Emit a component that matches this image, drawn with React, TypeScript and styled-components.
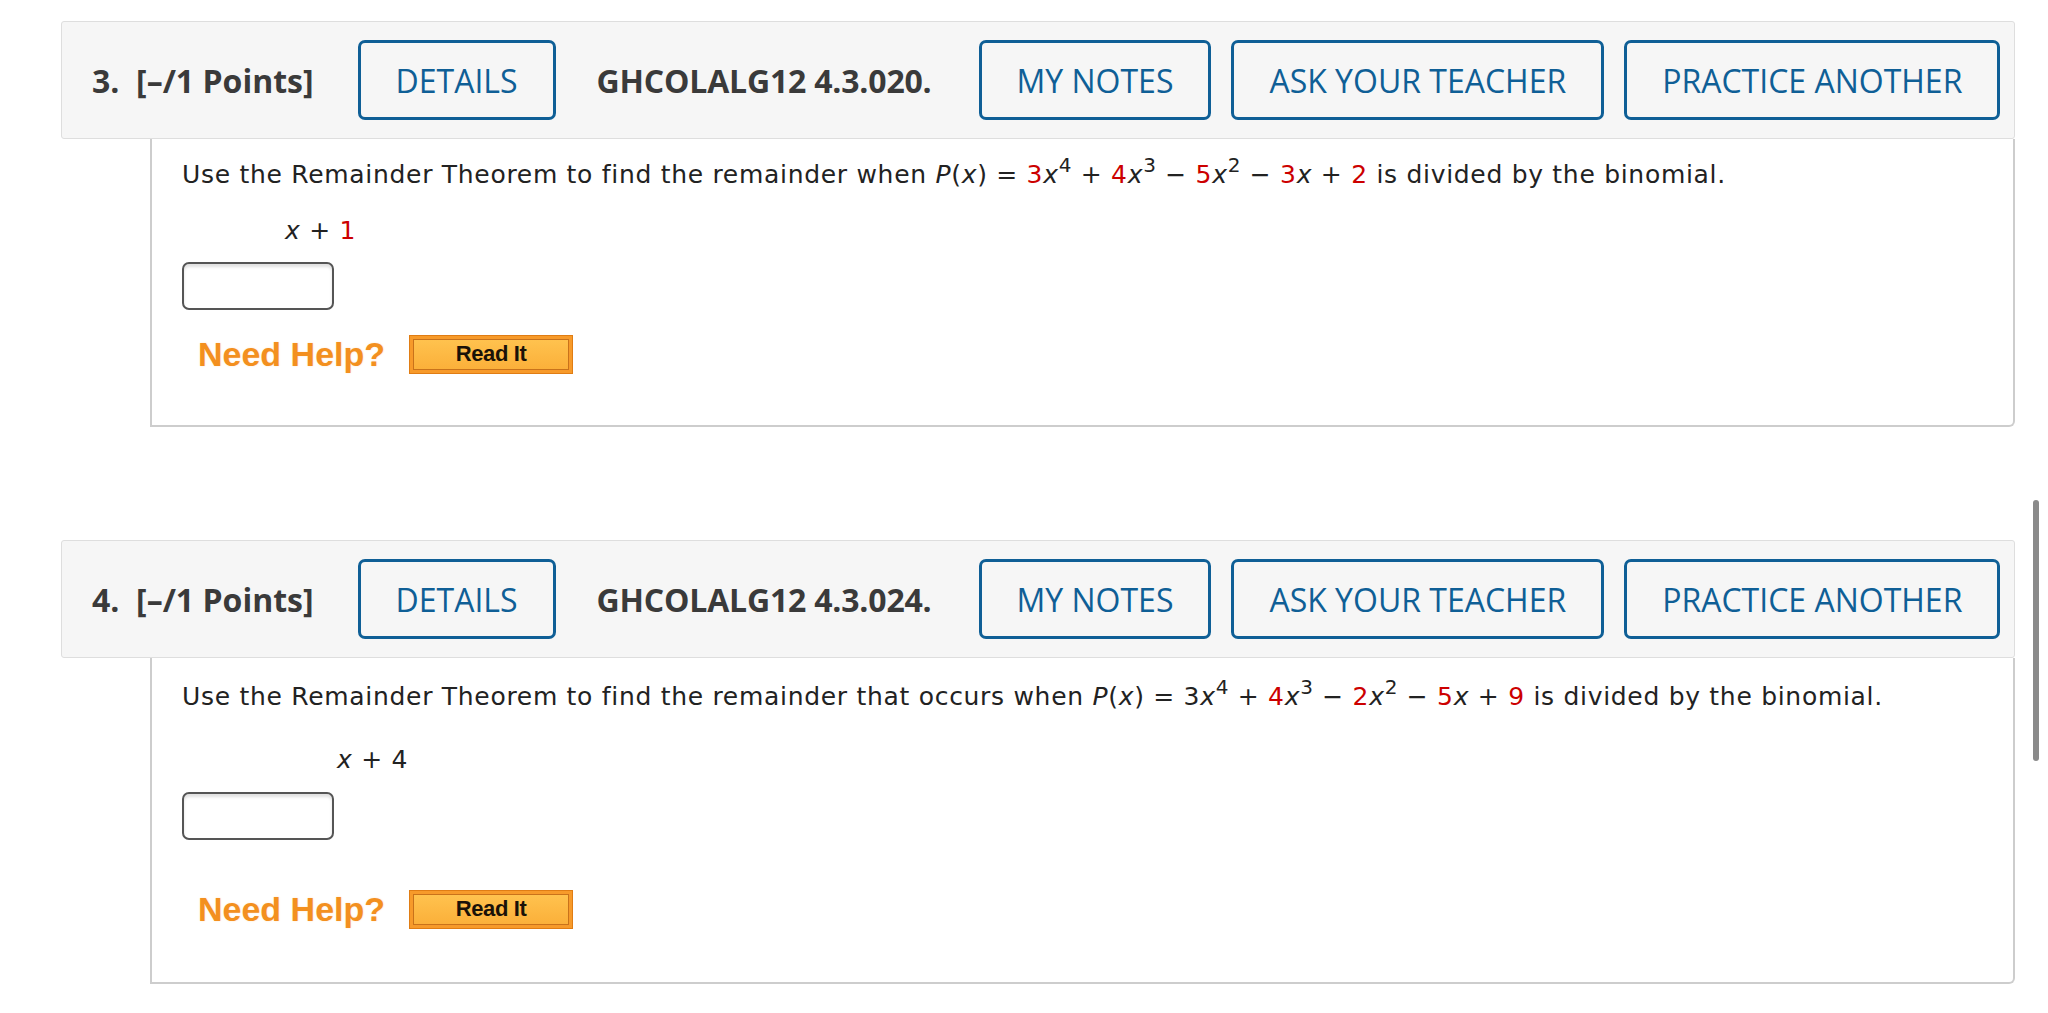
import React from "react";
import styled, { createGlobalStyle } from "styled-components";

const GlobalStyle = createGlobalStyle`
  html, body {
    margin: 0;
    padding: 0;
    background: #ffffff;
  }
  body {
    font-family: "DejaVu Sans", Verdana, sans-serif;
    overflow: hidden;
  }
`;

type Term = { text: string; red?: boolean; italic?: boolean; sup?: string };

type QuestionData = {
  num: number;
  code: string;
  lead: string;
  terms: Term[];
  binomial: Term[];
  binomialIndent: number;
  textTop: number;
  binomialGap: number;
  inputGap: number;
  helpGap: number;
  bottomGap: number;
};

const questions: QuestionData[] = [
  {
    num: 3,
    code: "GHCOLALG12 4.3.020.",
    lead: "Use the Remainder Theorem to find the remainder when ",
    terms: [
      { text: "P", italic: true },
      { text: "(" },
      { text: "x", italic: true },
      { text: ") = " },
      { text: "3", red: true },
      { text: "x", italic: true, sup: "4" },
      { text: " + " },
      { text: "4", red: true },
      { text: "x", italic: true, sup: "3" },
      { text: " \u2212 " },
      { text: "5", red: true },
      { text: "x", italic: true, sup: "2" },
      { text: " \u2212 " },
      { text: "3", red: true },
      { text: "x", italic: true },
      { text: " + " },
      { text: "2", red: true },
      { text: " is divided by the binomial." },
    ],
    binomial: [{ text: "x", italic: true }, { text: " + " }, { text: "1", red: true }],
    binomialIndent: 103,
    textTop: 18,
    binomialGap: 20,
    inputGap: 13,
    helpGap: 24,
    bottomGap: 51,
  },
  {
    num: 4,
    code: "GHCOLALG12 4.3.024.",
    lead: "Use the Remainder Theorem to find the remainder that occurs when ",
    terms: [
      { text: "P", italic: true },
      { text: "(" },
      { text: "x", italic: true },
      { text: ") = " },
      { text: "3" },
      { text: "x", italic: true, sup: "4" },
      { text: " + " },
      { text: "4", red: true },
      { text: "x", italic: true, sup: "3" },
      { text: " \u2212 " },
      { text: "2", red: true },
      { text: "x", italic: true, sup: "2" },
      { text: " \u2212 " },
      { text: "5", red: true },
      { text: "x", italic: true },
      { text: " + " },
      { text: "9", red: true },
      { text: " is divided by the binomial." },
    ],
    binomial: [{ text: "x", italic: true }, { text: "\u00a0+\u00a04" }],
    binomialIndent: 155,
    textTop: 21,
    binomialGap: 27,
    inputGap: 14,
    helpGap: 49,
    bottomGap: 53,
  },
];

const Page = styled.div`
  padding: 21px 33px 0 61px;
  display: flex;
  flex-direction: column;
  gap: 113px;
`;

const Question = styled.section`
  display: flex;
  flex-direction: column;
`;

const Header = styled.div`
  height: 118px;
  box-sizing: border-box;
  display: flex;
  align-items: center;
  padding: 0 21px 0 30px;
  background: #f6f6f6;
  border: 1px solid #dedede;
  border-radius: 3px;
  font-family: "Open Sans", sans-serif;
  font-size: 32px;
  white-space: nowrap;
`;

const Title = styled.div`
  flex-shrink: 0;
  font-weight: 700;
  color: #3a3a3a;
  white-space: pre;
  margin-right: 44px;
`;

const Code = styled.div`
  flex-shrink: 0;
  font-weight: 700;
  color: #3a3a3a;
  letter-spacing: -0.2px;
  margin: 0 47px 0 41px;
`;

const ButtonGroup = styled.div`
  flex-shrink: 0;
  display: flex;
  gap: 20px;
`;

const HeaderButton = styled.button`
  flex-shrink: 0;
  height: 80px;
  box-sizing: border-box;
  padding: 0 35px;
  border: 3px solid #0f5f96;
  border-radius: 7px;
  background: transparent;
  color: #0f5f96;
  font-family: "Open Sans", sans-serif;
  font-size: 32px;
  font-weight: 500;
  white-space: nowrap;
`;

const Body = styled.div<{ $top: number; $bottom: number }>`
  margin-left: 89px;
  border: 2px solid #cdcdcd;
  border-top: none;
  border-bottom-right-radius: 6px;
  padding: ${({ $top }) => $top}px 0 ${({ $bottom }) => $bottom}px 30px;
  display: flex;
  flex-direction: column;
  align-items: flex-start;
`;

const Statement = styled.p`
  margin: 0;
  font-size: 25px;
  letter-spacing: 0.7px;
  line-height: 36px;
  color: #222;
  white-space: nowrap;
`;

const Piece = styled.span<{ $red?: boolean; $italic?: boolean }>`
  color: ${({ $red }) => ($red ? "#cc0000" : "inherit")};
  font-style: ${({ $italic }) => ($italic ? "italic" : "normal")};
`;

const Sup = styled.sup`
  font-size: 0.8em;
  font-style: normal;
  line-height: 0;
  vertical-align: 0.55em;
`;

const Binomial = styled.div<{ $indent: number; $gap: number }>`
  margin: ${({ $gap }) => $gap}px 0 0 ${({ $indent }) => $indent}px;
  font-size: 25px;
  letter-spacing: 0.7px;
  line-height: 36px;
  color: #222;
`;

const AnswerBox = styled.input<{ $gap: number }>`
  margin-top: ${({ $gap }) => $gap}px;
  width: 152px;
  height: 48px;
  box-sizing: border-box;
  border: 2px solid #555;
  border-radius: 7px;
  box-shadow: inset 0 3px 3px rgba(0, 0, 0, 0.12);
  background: #fff;
  outline: none;
`;

const HelpRow = styled.div<{ $gap: number }>`
  margin: ${({ $gap }) => $gap}px 0 0 16px;
  display: flex;
  align-items: center;
  gap: 24px;
`;

const NeedHelp = styled.span`
  font-family: "Liberation Sans", Arial, sans-serif;
  font-weight: 700;
  font-size: 34px;
  line-height: 40px;
  color: #f3901f;
  text-shadow: 0 0 2px #fde3c4;
`;

const ReadIt = styled.button`
  width: 164px;
  height: 39px;
  box-sizing: border-box;
  padding: 3px;
  border: 1px solid #e07d14;
  background: #f79a2a;
  display: flex;
  cursor: pointer;
`;

const ReadItFace = styled.span`
  flex: 1;
  display: flex;
  align-items: center;
  justify-content: center;
  border: 1px solid #c9721a;
  background: linear-gradient(#ffc24e, #fbb03a);
  font-family: "Liberation Sans", Arial, sans-serif;
  font-weight: 700;
  font-size: 22px;
  letter-spacing: -0.4px;
  color: #1a1208;
`;

const ScrollThumb = styled.div`
  position: fixed;
  top: 500px;
  right: 9px;
  width: 6px;
  height: 261px;
  border-radius: 3px;
  background: #8a8a8a;
`;

const renderTerms = (terms: Term[]) =>
  terms.map((t, i) => (
    <Piece key={i} $red={t.red} $italic={t.italic}>
      {t.text}
      {t.sup && <Sup>{t.sup}</Sup>}
    </Piece>
  ));

const QuestionBlock = ({ q }: { q: QuestionData }) => (
  <Question>
    <Header>
      <Title>{`${q.num}.  [\u2013/1 Points]`}</Title>
      <HeaderButton>DETAILS</HeaderButton>
      <Code>{q.code}</Code>
      <ButtonGroup>
        <HeaderButton>MY NOTES</HeaderButton>
        <HeaderButton>ASK YOUR TEACHER</HeaderButton>
        <HeaderButton>PRACTICE ANOTHER</HeaderButton>
      </ButtonGroup>
    </Header>
    <Body $top={q.textTop} $bottom={q.bottomGap}>
      <Statement>
        {q.lead}
        {renderTerms(q.terms)}
      </Statement>
      <Binomial $indent={q.binomialIndent} $gap={q.binomialGap}>
        {renderTerms(q.binomial)}
      </Binomial>
      <AnswerBox $gap={q.inputGap} type="text" />
      <HelpRow $gap={q.helpGap}>
        <NeedHelp>Need Help?</NeedHelp>
        <ReadIt>
          <ReadItFace>Read It</ReadItFace>
        </ReadIt>
      </HelpRow>
    </Body>
  </Question>
);

export default function App() {
  return (
    <>
      <GlobalStyle />
      <Page>
        {questions.map((q) => (
          <QuestionBlock key={q.num} q={q} />
        ))}
      </Page>
      <ScrollThumb />
    </>
  );
}
